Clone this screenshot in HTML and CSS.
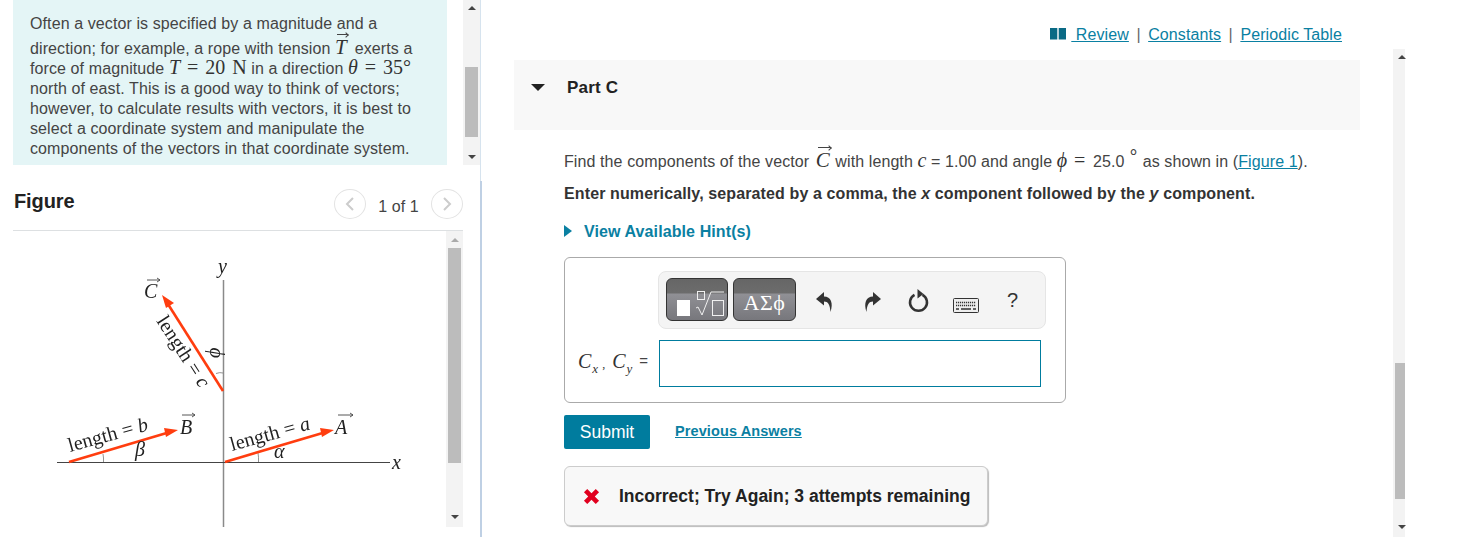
FILE: index.html
```html
<!DOCTYPE html>
<html lang="en">
<head>
<meta charset="utf-8">
<title>Part C</title>
<link rel="stylesheet" href="styles.css">
</head>
<body>
<div class="page">
  <aside class="left">
    <section class="intro">
      <div class="intro-text">
        <p class="intro-line">Often a vector is specified by a magnitude and a</p>
        <p class="intro-line tall">direction; for example, a rope with tension <span class="math big vec vec-t">T</span> exerts a</p>
        <p class="intro-line">force of magnitude <span class="math"><i>T</i> = 20 N</span> in a direction <span class="math"><i>θ</i> = 35°</span></p>
        <p class="intro-line">north of east. This is a good way to think of vectors;</p>
        <p class="intro-line">however, to calculate results with vectors, it is best to</p>
        <p class="intro-line">select a coordinate system and manipulate the</p>
        <p class="intro-line">components of the vectors in that coordinate system.</p>
      </div>
      <div class="sb sb-intro">
        <span class="arr up"></span>
        <span class="thumb thumb-intro"></span>
        <span class="arr down"></span>
      </div>
    </section>
    <section class="figure">
      <header class="fig-head">
        <h2 class="fig-title">Figure</h2>
        <div class="pager">
          <span class="pg-btn">
            <svg class="chev" viewBox="0 0 10 16"><path d="M8 2 2 8l6 6"/></svg>
          </span>
          <span class="pg-text">1 of 1</span>
          <span class="pg-btn">
            <svg class="chev" viewBox="0 0 10 16"><path d="M2 2l6 6-6 6"/></svg>
          </span>
        </div>
      </header>
      <div class="fig-body">
        <svg class="diagram" viewBox="13 231 433 296" width="433" height="296">
          <g class="axis">
            <path d="M223.500 280V527"/>
            <path d="M57 462.500H390"/>
          </g>
          <g class="tick">
            <path d="M103 454q.8 4 .5 8"/>
            <path d="M258 453q.8 4 .5 9"/>
            <path d="M216 373.500q4-1.500 7-.5"/>
          </g>
          <g class="vector">
            <path d="M223 391 166 301"/>
            <path d="M69 462 170 432"/>
            <path d="M225 462 326 432"/>
          </g>
          <g class="head">
            <path d="M162 295 174 303 166 308z"/>
            <path d="M178 430 166 437 164 428z"/>
            <path d="M334 430 322 437 320 428z"/>
          </g>
          <g class="fig-label">
            <text x="218" y="273" class="it">y</text>
            <text x="392" y="469" class="it">x</text>
            <text x="144" y="298" class="it">C</text>
            <text x="180" y="434" class="it">B</text>
            <text x="335" y="434" class="it">A</text>
            <text x="135" y="456" class="it">β</text>
            <text x="274" y="458" class="it">α</text>
            <text transform="translate(220 358) rotate(-90)" class="it">ϕ</text>
            <text transform="translate(70 452) rotate(-15.500)">length = <tspan class="it">b</tspan></text>
            <text transform="translate(232 451) rotate(-15.500)">length = <tspan class="it">a</tspan></text>
            <text transform="translate(156 321) rotate(57)">length = <tspan class="it">c</tspan></text>
          </g>
          <g class="fig-arrow">
            <path d="M147 280h13l-3-2M160 280l-3 2"/>
            <path d="M182 415h13l-3-2M195 415l-3 2"/>
            <path d="M338 415h15l-3-2M353 415l-3 2"/>
          </g>
        </svg>
        <div class="sb sb-fig">
          <span class="arr up light"></span>
          <span class="thumb thumb-fig"></span>
          <span class="arr down"></span>
        </div>
      </div>
    </section>
  </aside>

  <main class="right">
    <div class="content">
      <nav class="toplinks">
        <svg class="book" viewBox="0 0 16 12"><path d="M0 0h7.300v11.500H0zM8.700 0H16v11.500H8.700z"/></svg>
        <a class="link" href="#">&nbsp;Review</a><span class="sep">|</span><a class="link" href="#">Constants</a><span class="sep">|</span><a class="link" href="#">Periodic Table</a>
      </nav>
      <div class="part-head">
        <span class="tri-down"></span>
        <h3 class="part-title">Part C</h3>
      </div>
      <div class="part-body">
        <p class="question">Find the components of the vector <span class="math big vec vec-c">C</span> with length <span class="math m-c"><i>c</i></span> = 1.00 and angle <span class="math m-phi"><i>ϕ</i> =</span> 25.0 <sup class="deg">°</sup> as shown in (<a class="link" href="#">Figure 1</a>).</p>
        <p class="instruct">Enter numerically, separated by a comma, the <i>x</i> component followed by the <i>y</i> component.</p>
        <div class="hint"><span class="tri-right"></span><a class="hint-link" href="#">View Available Hint(s)</a></div>
        <div class="answer">
          <div class="toolbar">
            <span class="pal-btn pal-a">
              <svg class="pal-icon" viewBox="0 0 60 30" width="60" height="30">
                <rect class="pal-solid" x="10" y="12" width="13" height="16"/>
                <g class="pal-line">
                  <rect x="30.500" y="3.500" width="7" height="8"/>
                  <path d="M29 20l2-1 4 8 9-23h13"/>
                  <rect x="45.500" y="12.500" width="11" height="15"/>
                </g>
              </svg>
            </span>
            <span class="pal-btn pal-b">ΑΣϕ</span>
            <svg class="tool t-undo" viewBox="0 0 18 20"><path d="M8 0 0 7l8 6.500V9.500c4 0 6 3 6.500 10.500C17.500 11 15 4.500 8 4.500z"/></svg>
            <svg class="tool t-redo" viewBox="0 0 18 20"><path d="M10 0l8 7-8 6.500V9.500c-4 0-6 3-6.500 10.500C.5 11 3 4.500 10 4.500z"/></svg>
            <svg class="tool t-reset" viewBox="0 0 22 24"><path class="t-ring" d="M14.500 5.800A8.500 8.500 0 1 1 6.500 5.800"/><path d="M9.500 0 15.500 5 9.500 9.500z"/></svg>
            <svg class="tool t-keys" viewBox="0 0 26 15">
              <rect class="k-frame" x=".5" y=".5" width="25" height="14" rx="1"/>
              <path class="k-dots" d="M3 4.500h20M3 7.500h20"/>
              <path class="k-bar" d="M3 11h3M8 11h10M20 11h3"/>
            </svg>
            <span class="t-help">?</span>
          </div>
          <div class="eq-row">
            <label class="eq-label"><span class="math m-eq"><i>C<sub>x</sub></i><small class="eq-comma">,</small><i>C<sub>y</sub></i></span><span class="eq-sign">=</span></label>
            <input class="eq-input" type="text" aria-label="answer">
          </div>
        </div>
        <div class="actions">
          <button class="submit" type="button">Submit</button>
          <a class="prev" href="#">Previous Answers</a>
        </div>
        <div class="feedback">
          <svg class="x-icon" viewBox="0 0 18 18"><path d="M1 4.500 4.500 1 9 5.500 13.500 1 17 4.500 12.500 9 17 13.500 13.500 17 9 12.500 4.500 17 1 13.500 5.500 9z"/></svg>
          <span>Incorrect; Try Again; 3 attempts remaining</span>
        </div>
      </div>
    </div>
    <div class="sb sb-main">
      <span class="arr up"></span>
      <span class="thumb thumb-main"></span>
      <span class="arr down"></span>
    </div>
  </main>
</div>
</body>
</html>
```
FILE: styles.css
```css
* { box-sizing: border-box; }
html, body { margin: 0; padding: 0; background: #fff; }
body { font-family: "Liberation Sans", Arial, sans-serif; font-size: 16px; color: #444; overflow: hidden; letter-spacing: .1px; }
p, h2, h3 { margin: 0; }
a { color: #0a80a2; }

.page { display: flex; align-items: flex-start; width: 1479px; height: 537px; }

/* generic scrollbar */
.sb { display: flex; flex-direction: column; align-items: flex-end; background: #f3f3f3; position: relative; }
.thumb { display: block; background: #bcbcbc; }
.arr { display: block; width: 0; height: 0; border-left: 4px solid transparent; border-right: 4px solid transparent; align-self: center; }
.arr.up { border-bottom: 4px solid #444; }
.arr.down { border-top: 4px solid #444; }
.arr.light { border-bottom-color: #aaa; }

/* left column */
.left { width: 481px; flex: none; height: 537px; display: flex; flex-direction: column; }
.intro { display: flex; height: 181px; padding: 0 0 16px 13px; border-right: 1px solid #d6e3ee; }
.intro-text { width: 434px; height: 165px; background: #e4f5f6; padding: 14px 17px 0; font-size: 16px; line-height: 20px; color: #444; }
.intro-line { white-space: nowrap; }
.intro-line.tall { line-height: 25px; height: 23px; padding-top: 2px; }
.sb-intro { width: 17px; height: 165px; margin-left: 16px; }
.sb-intro .arr.up { margin-top: 6px; }
.sb-intro .arr.down { margin-top: 18px; }
.thumb-intro { width: 13px; height: 70px; margin: 57px 2px 0 0; }

.figure { flex: 1; border-right: 2px solid #bfd0e4; min-height: 0; margin-right: -1px; }
.fig-head { height: 50px; margin: 0 17px 0 13px; border-bottom: 1px solid #dde0e2; display: flex; justify-content: space-between; align-items: flex-start; }
.fig-title { font-size: 20px; line-height: 24px; font-weight: bold; color: #222; margin: 8px 0 0 1px; letter-spacing: -.1px; }
.pager { display: flex; align-items: flex-start; width: 129px; margin-top: 8px; }
.pg-btn { width: 32px; height: 30px; border: 1px solid #e3e3e3; border-radius: 50%; display: flex; align-items: center; justify-content: center; flex: none; }
.pg-text { width: 65px; text-align: center; font-size: 16px; line-height: 18px; color: #444; margin-top: 9px; }
.chev { width: 10px; height: 16px; fill: none; stroke: #ccc; stroke-width: 2; }

.fig-body { display: flex; height: 296px; margin-left: 13px; }
.diagram { display: block; flex: none; filter: blur(.45px); }
.axis path { stroke: #8a8a8a; stroke-width: 1.500; fill: none; }
.axis path + path { stroke: #444; stroke-width: 1.200; }
.tick path { stroke: #777; stroke-width: .8; fill: none; }
.vector path { stroke: #ff3d0f; stroke-width: 2.600; fill: none; }
.head path { fill: #ff3d0f; }
.fig-label text { font-family: "Liberation Serif", serif; font-size: 20px; fill: #222; }
.fig-label .it { font-style: italic; }
.fig-arrow path { stroke: #444; stroke-width: .9; fill: none; }
.sb-fig { width: 17px; height: 296px; }
.sb-fig .arr.up { margin-top: 7px; }
.sb-fig .arr.down { margin-top: 52px; }
.thumb-fig { width: 13px; height: 215px; margin: 6px 2px 0 0; }

/* right pane */
.right { flex: 1; display: flex; align-items: flex-start; }
.content { width: 912px; flex: none; }
.toplinks { display: flex; align-items: center; justify-content: flex-end; height: 60px; padding: 10px 51px 0 0; line-height: 20px; }
.book { width: 16px; height: 12px; fill: #0a6a85; margin: -3px 5px 0 0; }
.sep { margin: 0 7.500px; color: #666; }
.part-head { margin-left: 33px; width: 846px; height: 70px; background: #f8f8f8; display: flex; align-items: flex-start; padding: 19px 0 0 17px; }
.tri-down { width: 0; height: 0; border-left: 7px solid transparent; border-right: 7px solid transparent; border-top: 7px solid #222; margin-top: 5px; }
.part-title { font-size: 17px; line-height: 18px; font-weight: bold; color: #222; margin-left: 22px; letter-spacing: .2px; }
.part-body { padding: 19px 0 0 83px; }
.question { font-size: 16px; line-height: 22px; white-space: nowrap; }
.deg { font-size: 20px; line-height: 0; vertical-align: 3px; margin: 0 .5px; }
.instruct { font-size: 16px; line-height: 20px; font-weight: bold; color: #333; margin-top: 11px; white-space: nowrap; letter-spacing: .12px; }
.hint { display: flex; align-items: center; margin-top: 18px; height: 20px; }
.tri-right { width: 0; height: 0; border-top: 6px solid transparent; border-bottom: 6px solid transparent; border-left: 8px solid #0a80a2; margin-top: -3px; }
.hint-link { font-weight: bold; margin-left: 12px; text-decoration: none; }

.answer { margin-top: 15px; width: 502px; height: 146px; border: 1px solid #aaa; border-radius: 6px; padding: 13px 19px 0 13px; }
.toolbar { margin-left: 80px; width: 388px; height: 58px; background: #f4f4f4; border: 1px solid #e5e5e5; border-radius: 8px; display: flex; align-items: center; padding: 0 7px 2px; position: relative; }
.pal-btn { height: 43px; border: 1px solid #333; border-radius: 6px; background: linear-gradient(#666 0, #6c6c6c 14px, #909095 15px, #77777c 100%); color: #fff; display: flex; align-items: center; justify-content: center; font-family: "Liberation Serif", serif; flex: none; }
.pal-a { width: 62px; align-items: flex-end; padding-bottom: 2px; }
.pal-icon { display: block; overflow: visible; }
.pal-solid { fill: #fff; }
.pal-line { fill: none; stroke: #f0f0f0; stroke-width: 1; }
.pal-b { width: 63px; margin-left: 5px; font-size: 22px; padding-top: 7px; letter-spacing: .5px; }
.tool { flex: none; fill: #333; }
.t-undo { width: 18px; height: 20px; margin: 6px 0 0 20px; }
.t-redo { width: 18px; height: 20px; margin: 6px 0 0 29px; }
.t-reset { width: 22px; height: 24px; margin: 4px 0 0 27px; }
.t-ring { fill: none; stroke: #333; stroke-width: 2.500; }
.t-keys { width: 26px; height: 15px; margin: 13px 0 0 23px; fill: none; }
.k-frame { fill: #eee; stroke: #333; stroke-width: 1; }
.k-dots { stroke: #333; stroke-width: 1.500; stroke-dasharray: 1.200 .8; fill: none; }
.k-bar { stroke: #333; stroke-width: 1.500; fill: none; }
.t-help { margin: 3px 0 0 28px; font-size: 20px; color: #333; }

.eq-row { display: flex; align-items: center; margin-top: 11px; }
.eq-label { width: 81px; font-size: 16px; white-space: nowrap; padding-bottom: 4px; }
.m-eq { font-size: 21px; word-spacing: 0; }
.m-eq sub { font-size: 13px; line-height: 0; margin-left: 1px; }
.eq-comma { font-size: 12px; margin: 0 7px 0 4px; }
.eq-sign { font-size: 15px; margin-left: 7px; vertical-align: 2px; }
.eq-input { width: 382px; height: 47px; border: 1px solid #007c9e; background: #fff; outline: none; padding: 0; display: block; }

.actions { display: flex; align-items: center; margin-top: 12px; height: 34px; }
.submit { width: 86px; height: 34px; border: 0; border-radius: 2px; background: #007c9e; color: #fff; font-family: inherit; font-size: 17.500px; letter-spacing: 0; padding: 0; }
.prev { margin: 0 0 2px 25px; font-size: 14.500px; font-weight: bold; }

.feedback { margin-top: 17px; width: 424px; height: 60px; background: #f8f8f8; border: 1px solid #ccc; border-radius: 6px; box-shadow: 1px 1px 1px #bbb; display: flex; align-items: center; padding-left: 18px; font-size: 17.500px; letter-spacing: 0; font-weight: bold; color: #222; white-space: nowrap; }
.x-icon { width: 17px; height: 17px; fill: #e1001f; margin-right: 19px; flex: none; }

.sb-main { width: 12px; height: 488px; margin-top: 49px; }
.sb-main .arr { margin-left: 5px; }
.sb-main .arr.up { margin-top: 6px; }
.sb-main .arr.down { margin-top: 26px; }
.thumb-main { width: 10px; height: 136px; margin-top: 304px; }

/* math */
.math { font-family: "Liberation Serif", serif; font-size: 20px; color: #333; word-spacing: 2px; letter-spacing: 0; }
.math.big { font-size: 21px; font-style: italic; }
.vec { position: relative; display: inline-block; line-height: 1; }
.vec-t { margin: 0 3.500px 0 0; }
.vec-c { margin: 0 1px 0 2px; }
.vec::before { content: ""; position: absolute; left: 2px; right: -1px; top: -3px; height: 1px; background: #444; }
.vec::after { content: ""; position: absolute; right: -1px; top: -4px; width: 3px; height: 3px; border-top: 1px solid #444; border-right: 1px solid #444; transform: rotate(45deg); }
.m-c { margin: 0; }
.m-phi { margin-right: 3px; }
```
